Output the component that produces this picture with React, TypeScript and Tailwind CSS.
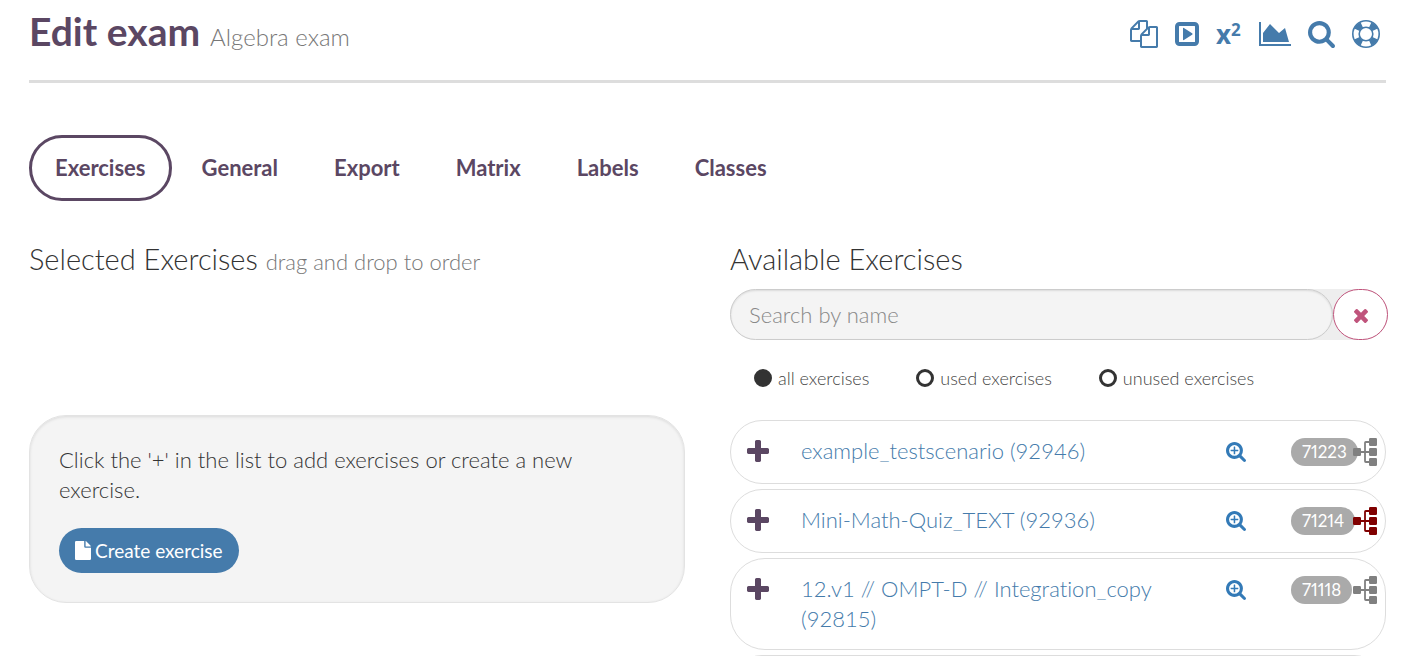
import { useState } from 'react';

type Exercise = {
  id: number;
  name: string;
  version: number;
  linked: boolean;
};

const exercises: Exercise[] = [
  { id: 92946, name: 'example_testscenario', version: 71223, linked: false },
  { id: 92936, name: 'Mini-Math-Quiz_TEXT', version: 71214, linked: true },
  { id: 92815, name: '12.v1 // OMPT-D // Integration_copy', version: 71118, linked: false },
];

const tabs = ['Exercises', 'General', 'Export', 'Matrix', 'Labels', 'Classes'];

const filters = [
  { value: 'all', label: 'all exercises' },
  { value: 'used', label: 'used exercises' },
  { value: 'unused', label: 'unused exercises' },
];

function CopyIcon() {
  return (
    <svg viewBox="0 0 1792 1792" className="w-7 h-7" fill="currentColor">
      <path d="M1696 384q40 0 68 28t28 68v1216q0 40-28 68t-68 28h-960q-40 0-68-28t-28-68v-288h-544q-40 0-68-28t-28-68v-672q0-40 20-88t48-76l408-408q28-28 76-48t88-20h416q40 0 68 28t28 68v328q68-40 128-40h416zm-544 213l-299 299h299v-299zm-640-384l-299 299h299v-299zm196 647l316-316v-416h-384v416q0 40-28 68t-68 28h-416v640h512v-256q0-40 20-88t48-76zm956 804v-1152h-384v416q0 40-28 68t-68 28h-416v640h896z" />
    </svg>
  );
}

function PlayIcon() {
  return (
    <svg viewBox="0 0 24 24" className="w-6 h-6" fill="none">
      <rect x="2" y="2" width="20" height="20" rx="2.5" stroke="currentColor" strokeWidth="4" />
      <path d="M8 6.5v11a.6.6 0 0 0 .9.5l8.2-5.3a.8.8 0 0 0 0-1.4L8.9 6a.6.6 0 0 0-.9.5z" fill="currentColor" />
    </svg>
  );
}

function PowerIcon() {
  return (
    <span className="block w-[26px] h-7 text-left font-['Noto_Sans','Open_Sans',sans-serif] font-bold text-[26px] leading-7">
      x<sup className="text-[17px]">2</sup>
    </span>
  );
}

function ChartIcon() {
  return (
    <svg viewBox="0 0 2048 1792" className="w-8 h-7" fill="currentColor">
      <path d="M2048 1536v128h-2048v-1536h128v1408h1920zm-384-1024l256 896h-1664v-576l448-576 576 576z" />
    </svg>
  );
}

function SearchIcon() {
  return (
    <svg viewBox="64 128 1664 1664" className="w-[27px] h-[27px]" fill="currentColor">
      <path d="M1216 832q0-185-131.5-316.5t-316.5-131.5-316.5 131.5-131.5 316.5 131.5 316.5 316.5 131.5 316.5-131.5 131.5-316.5zm512 832q0 52-38 90t-90 38q-54 0-90-38l-343-342q-179 124-399 124-143 0-273.5-55.5t-225-150-150-225-55.5-273.5 55.5-273.5 150-225 225-150 273.5-55.5 273.5 55.5 225 150 150 225 55.5 273.5q0 220-124 399l343 343q37 37 37 90z" />
    </svg>
  );
}

function ZoomInIcon() {
  return (
    <svg viewBox="64 128 1664 1664" className="w-5 h-5" fill="currentColor">
      <path d="M1088 800v64q0 13-9.5 22.5t-22.5 9.5h-224v224q0 13-9.5 22.5t-22.5 9.5h-64q-13 0-22.5-9.5t-9.5-22.5v-224h-224q-13 0-22.5-9.5t-9.5-22.5v-64q0-13 9.5-22.5t22.5-9.5h224v-224q0-13 9.5-22.5t22.5-9.5h64q13 0 22.5 9.5t9.5 22.5v224h224q13 0 22.5 9.5t9.5 22.5zm128 32q0-185-131.5-316.5t-316.5-131.5-316.5 131.5-131.5 316.5 131.5 316.5 316.5 131.5 316.5-131.5 131.5-316.5zm512 832q0 53-37.5 90.5t-90.5 37.5q-54 0-90-38l-343-342q-179 124-399 124-143 0-273.5-55.5t-225-150-150-225-55.5-273.5 55.5-273.5 150-225 225-150 273.5-55.5 273.5 55.5 225 150 150 225 55.5 273.5q0 220-124 399l343 343q37 37 37 90z" />
    </svg>
  );
}

function LifeRingIcon() {
  return (
    <svg viewBox="0 0 28 28" className="w-7 h-7" fill="none" stroke="currentColor">
      <circle cx="14" cy="14" r="13.2" strokeWidth="1.6" />
      <circle cx="14" cy="14" r="6.8" strokeWidth="1.6" />
      <circle
        cx="14"
        cy="14"
        r="10"
        strokeWidth="6"
        pathLength="80"
        strokeDasharray="9 11"
        strokeDashoffset="-5.5"
      />
    </svg>
  );
}

function PlusIcon() {
  return (
    <svg viewBox="192 128 1408 1408" className="w-[22px] h-[22px]" fill="currentColor">
      <path d="M1600 736v192q0 40-28 68t-68 28h-416v416q0 40-28 68t-68 28h-192q-40 0-68-28t-28-68v-416h-416q-40 0-68-28t-28-68v-192q0-40 28-68t68-28h416v-416q0-40 28-68t68-28h192q40 0 68 28t28 68v416h416q40 0 68 28t28 68z" />
    </svg>
  );
}

function TimesIcon() {
  return (
    <svg viewBox="302 366 1188 1188" className="w-[14px] h-[14px]" fill="currentColor">
      <path d="M1490 1322q0 40-28 68l-136 136q-28 28-68 28t-68-28l-294-294-294 294q-28 28-68 28t-68-28l-136-136q-28-28-28-68t28-68l294-294-294-294q-28-28-28-68t28-68l136-136q28-28 68-28t68 28l294 294 294-294q28-28 68-28t68 28l136 136q28 28 28 68t-28 68l-294 294 294 294q28 28 28 68z" />
    </svg>
  );
}

function FileIcon() {
  return (
    <svg viewBox="0 0 16 19" className="w-4 h-[19px]" fill="currentColor">
      <path d="M9.2 0v5.6a1.2 1.2 0 0 0 1.2 1.2H16v11a1.2 1.2 0 0 1-1.2 1.2H1.2A1.2 1.2 0 0 1 0 17.8V1.2A1.2 1.2 0 0 1 1.2 0z" />
      <path d="M10.6.1q.7.2 1.1.6l3.5 3.5q.5.5.6 1.2h-5.200z" />
    </svg>
  );
}

function TreeIcon() {
  return (
    <svg viewBox="0 0 24 28" className="w-6 h-7" fill="currentColor">
      <rect x="0" y="10" width="8" height="8" rx="1.2" />
      <rect x="16" y="0" width="8" height="8" rx="1.2" />
      <rect x="16" y="10" width="8" height="8" rx="1.2" />
      <rect x="16" y="20" width="8" height="8" rx="1.2" />
      <path d="M7 14h10M17 4h-4.2a.8.8 0 0 0-.8.8v18.4a.8.8 0 0 0 .8.8H17" fill="none" stroke="currentColor" strokeWidth="1.8" />
    </svg>
  );
}

const tools = [
  { label: 'Copy exam', icon: <CopyIcon /> },
  { label: 'Preview', icon: <PlayIcon /> },
  { label: 'Formulas', icon: <PowerIcon /> },
  { label: 'Statistics', icon: <ChartIcon /> },
  { label: 'Search', icon: <SearchIcon /> },
  { label: 'Help', icon: <LifeRingIcon /> },
];

function ExerciseRow({ exercise }: { exercise: Exercise }) {
  return (
    <li className="flex items-start min-h-[64px] py-[15px] pl-4 pr-2 border border-[#ddd] rounded-[35px]">
      <button aria-label={`Add ${exercise.name}`} className="flex items-center h-[30px] w-[54px] shrink-0 text-[#5b4763]">
        <PlusIcon />
      </button>
      <a href="#" className="flex-1 text-[#457bab]">
        {exercise.name} ({exercise.id})
      </a>
      <button aria-label={`Preview ${exercise.name}`} className="flex items-center h-8 w-[65px] ml-12 shrink-0 text-[#337ab7]">
        <ZoomInIcon />
      </button>
      <div className="relative flex items-center h-8 w-[86px] shrink-0">
        <span className="px-[11px] rounded-full bg-[#aaa] text-white text-[17px] leading-7 font-normal proportional-nums">
          {exercise.version}
        </span>
        <span className={`absolute right-0 ${exercise.linked ? 'text-[#800000]' : 'text-[#808080]'}`}>
          <TreeIcon />
        </span>
      </div>
    </li>
  );
}

export default function App() {
  const [activeTab, setActiveTab] = useState('Exercises');
  const [filter, setFilter] = useState('all');
  const [query, setQuery] = useState('');

  return (
    <div className="pl-[29px] pr-[26px] font-['Lato','Open_Sans',sans-serif] font-light text-[22px] leading-[30px] text-[#333] [font-variant-ligatures:none]">
      <header className="flex items-start justify-between h-[83px] border-b-3 border-[#ddd]">
        <h1 className="flex items-baseline gap-[10px] pt-[11px] text-[39px] leading-10 font-bold text-[#5b4763]">
          Edit exam
          <small className="text-[24px] font-light text-[#777]">Algebra exam</small>
        </h1>
        <div className="flex items-center gap-[17px] pt-5 pr-[6px] text-[#457bab]">
          {tools.map((tool) => (
            <button key={tool.label} aria-label={tool.label}>
              {tool.icon}
            </button>
          ))}
        </div>
      </header>

      <nav className="flex gap-1 mt-[52px]">
        {tabs.map((tab) => (
          <button
            key={tab}
            onClick={() => setActiveTab(tab)}
            className={`h-[66px] px-[23px] border-3 rounded-[33px] font-bold text-[#5b4763] ${
              activeTab === tab ? 'border-[#5b4763]' : 'border-transparent'
            }`}
          >
            {tab}
          </button>
        ))}
      </nav>

      <main className="grid grid-cols-2 gap-[45px] pt-[42px]">
        <section>
          <h2 className="text-[29px] leading-8">
            Selected Exercises <small className="text-[22px] text-[#777]">drag and drop to order</small>
          </h2>
          <div className="mt-[137px] p-[29px] border border-[#e3e3e3] rounded-[37px] bg-[#f4f4f4] shadow-[inset_0_1px_3px_rgba(0,0,0,0.1)]">
            <p>Click the '+' in the list to add exercises or create a new exercise.</p>
            <button className="flex items-center gap-1 h-[45px] mt-[23px] px-4 rounded-full bg-[#457bab] text-white text-[19px] font-normal">
              <FileIcon />
              Create exercise
            </button>
          </div>
        </section>

        <section>
          <h2 className="text-[29px] leading-8">Available Exercises</h2>
          <div className="flex mt-[14px] -mr-[2px] rounded-[26px] bg-[#eee]">
            <input
              type="text"
              aria-label="Search by name"
              placeholder="Search by name"
              value={query}
              onChange={(e) => setQuery(e.target.value)}
              className="flex-1 min-w-0 h-[51px] px-[18px] border border-[#ccc] rounded-[26px] bg-[#f4f4f4] placeholder-[#888] outline-none shadow-[inset_0_1px_2px_rgba(0,0,0,0.1)]"
            />
            <button
              aria-label="Clear search"
              onClick={() => setQuery('')}
              className="flex items-center justify-center w-[55px] h-[51px] pt-[2px] border border-[#c0547c] rounded-[26px] bg-white text-[#c0547c]"
            >
              <TimesIcon />
            </button>
          </div>

          <div className="flex gap-[47px] mt-6 ml-6 text-[18px] leading-7">
            {filters.map((f) => (
              <label key={f.value} className="flex items-center gap-[6px] text-[#444]">
                <input
                  type="radio"
                  name="filter"
                  value={f.value}
                  checked={filter === f.value}
                  onChange={() => setFilter(f.value)}
                  className="appearance-none w-[18px] h-[18px] border-3 border-[#333] rounded-full checked:bg-[#333]"
                />
                {f.label}
              </label>
            ))}
          </div>

          <ul className="flex flex-col gap-[5px] mt-7">
            {exercises.map((exercise) => (
              <ExerciseRow key={exercise.id} exercise={exercise} />
            ))}
            <li className="h-16 border border-[#ddd] rounded-[35px]" />
          </ul>
        </section>
      </main>
    </div>
  );
}
